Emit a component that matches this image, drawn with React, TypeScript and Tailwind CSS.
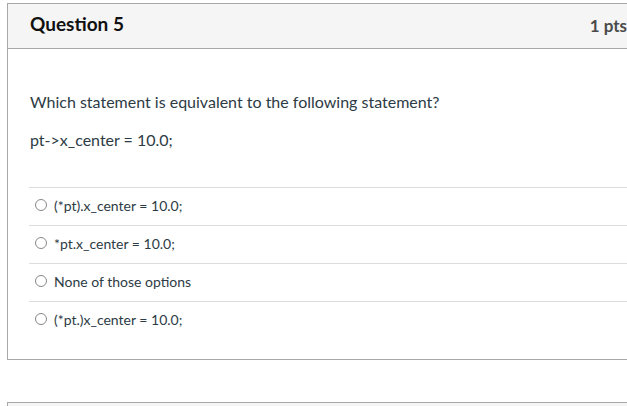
import React from "react";

const options = [
  "(*pt).x_center = 10.0;",
  "*pt.x_center = 10.0;",
  "None of those options",
  "(*pt.)x_center = 10.0;",
];

export default function App() {
  return (
    <div
      className="w-[627px] h-[406px] overflow-hidden bg-white pt-[3px] pl-[7px] text-[#2d3b45]"
      style={{ fontFamily: "Lato, 'Liberation Sans', sans-serif" }}
    >
      <div className="w-[640px] border border-[#a8a8a8]">
        <div className="h-[45px] bg-[#f5f5f5] border-b border-[#a8a8a8] flex items-center justify-between pl-[22px] pr-[19px]">
          <span className="text-[19px] font-bold text-[#111] pb-[4px]">Question 5</span>
          <span className="text-[17px] font-bold text-[#4a4a4a]">1 pts</span>
        </div>
        <div className="pt-[42px] pb-[20px]">
          <p className="pl-[22px] text-[16px] leading-[22px]">
            Which statement is equivalent to the following statement?
          </p>
          <p className="pl-[22px] mt-[16px] text-[16px] leading-[22px]">
            pt-&gt;x_center = 10.0;
          </p>
          <div className="ml-[21px] mt-[36px]">
            {options.map((o) => (
              <div
                key={o}
                className="h-[38px] border-t border-[#dddddd] flex items-center pb-[3px]"
              >
                <span className="ml-[6px] w-[12px] h-[12px] rounded-full border border-[#888] bg-white" />
                <span className="ml-[7px] text-[14px]">{o}</span>
              </div>
            ))}
          </div>
        </div>
      </div>
      <div className="mt-[42px] w-[640px] h-[20px] border border-[#a8a8a8] bg-[#f5f5f5]" />
    </div>
  );
}
